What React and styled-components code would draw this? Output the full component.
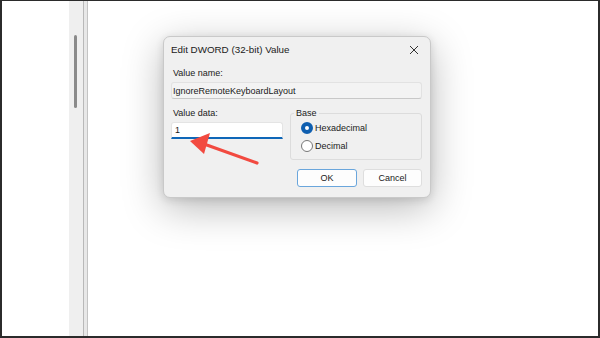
import React from 'react';
import styled, { createGlobalStyle } from 'styled-components';

const Global = createGlobalStyle`
  html, body { margin: 0; padding: 0; background: #ffffff; }
  body { font-family: "Liberation Sans", Arial, sans-serif; }
  * { box-sizing: border-box; }
`;

const Frame = styled.div`
  width: 600px;
  height: 338px;
  border-style: solid;
  border-color: #2b2b2b;
  border-width: 1px 2px 2px 2px;
  display: flex;
  overflow: hidden;
  background: #ffffff;
`;

const LeftPane = styled.div`
  width: 67px;
  background: #ffffff;
`;

const Gutter = styled.div`
  width: 14px;
  background: #efefef;
  padding: 34px 0 0 5px;
`;

const Thumb = styled.div`
  width: 3px;
  height: 73px;
  border-radius: 2px;
  background: #8a8a8a;
`;

const Divider = styled.div`
  width: 5px;
  border-left: 1px solid #b9b9b9;
  border-right: 1px solid #c4c4c4;
  background: #e8e8e8;
`;

const Content = styled.div`
  flex: 1;
  padding: 35px 0 0 75px;
`;

const Dialog = styled.div`
  position: relative;
  width: 268px;
  height: 162px;
  background: #f0f0f0;
  border: 1px solid #c9c9c9;
  border-radius: 7px;
  box-shadow: 0 10px 40px rgba(0, 0, 0, 0.28), 0 2px 8px rgba(0, 0, 0, 0.12);
  padding: 0 8px 0 7px;
  display: flex;
  flex-direction: column;
`;

const TitleBar = styled.div`
  height: 23px;
  display: flex;
  align-items: center;
  justify-content: space-between;
  padding-top: 2px;
  font-size: 9.8px;
  color: #1a1a1a;
`;

const Close = styled.svg`
  width: 10px;
  height: 10px;
  margin-right: 3px;
`;

const Label = styled.div`
  font-size: 9px;
  color: #1a1a1a;
  padding-left: 2px;
  line-height: 12px;
  margin-top: ${p => p.$top || 0}px;
`;

const NameBox = styled.div`
  margin-top: 3px;
  height: 17px;
  border: 1px solid #e2e2e2;
  border-bottom-color: #c8c8c8;
  border-radius: 3px;
  background: #f3f3f3;
  font-size: 9px;
  color: #1a1a1a;
  padding-left: 1px;
  display: flex;
  align-items: center;
`;

const Row = styled.div`
  display: flex;
  justify-content: space-between;
  margin-top: ${p => p.$top || 0}px;
`;

const DataCol = styled.div`
  width: 112px;
  display: flex;
  flex-direction: column;
`;

const DataInput = styled.div`
  margin-top: 3px;
  height: 17px;
  background: #ffffff;
  border: 1px solid #e4e4e4;
  border-bottom: 2px solid #0f67b8;
  border-radius: 3px 3px 0 0;
  font-size: 9px;
  padding-left: 3px;
  display: flex;
  align-items: center;
  color: #1a1a1a;
`;

const Group = styled.fieldset`
  margin: 0;
  width: 132px;
  height: 53px;
  border: 1px solid #dcdcdc;
  border-radius: 3px;
  padding: 2px 0 0 10px;
  display: flex;
  flex-direction: column;
  gap: 4px;
`;

const Legend = styled.legend`
  font-size: 9px;
  line-height: 12px;
  color: #1a1a1a;
  padding: 0 2px;
  margin-left: -7px;
`;

const Radio = styled.div`
  display: flex;
  align-items: center;
  gap: 2px;
  font-size: 9px;
  color: #1a1a1a;
  height: 14px;
`;

const Dot = styled.span`
  width: 12px;
  height: 12px;
  border-radius: 50%;
  border: ${p => (p.$on ? '4px solid #0f5fb0' : '1px solid #777')};
  background: #ffffff;
`;

const Buttons = styled.div`
  display: flex;
  justify-content: flex-end;
  gap: 6px;
  margin-top: 9px;
`;

const Button = styled.div`
  width: ${p => p.$w}px;
  height: 18px;
  border-radius: 3px;
  background: #fdfdfd;
  border: 1px solid ${p => (p.$primary ? '#6aa6dc' : '#dedede')};
  font-size: 9px;
  color: #1a1a1a;
  display: flex;
  align-items: center;
  justify-content: center;
`;

const Arrow = styled.svg`
  position: absolute;
  left: 0;
  top: 0;
  pointer-events: none;
`;

export default function App() {
  return (
    <>
      <Global />
      <Frame>
        <LeftPane />
        <Gutter>
          <Thumb />
        </Gutter>
        <Divider />
        <Content>
          <Dialog>
            <TitleBar>
              <span>Edit DWORD (32-bit) Value</span>
              <Close viewBox="0 0 10 10">
                <path d="M1 1 L9 9 M9 1 L1 9" stroke="#333" strokeWidth="1" />
              </Close>
            </TitleBar>
            <Label $top={7}>Value name:</Label>
            <NameBox>IgnoreRemoteKeyboardLayout</NameBox>
            <Row $top={8}>
              <DataCol>
                <Label>Value data:</Label>
                <DataInput>1</DataInput>
              </DataCol>
              <Group>
                <Legend>Base</Legend>
                <Radio>
                  <Dot $on />
                  Hexadecimal
                </Radio>
                <Radio>
                  <Dot />
                  Decimal
                </Radio>
              </Group>
            </Row>
            <Buttons>
              <Button $w={60} $primary>OK</Button>
              <Button $w={59}>Cancel</Button>
            </Buttons>
            <Arrow width="268" height="162" viewBox="0 0 268 162">
              <line x1="93" y1="126" x2="40" y2="107" stroke="#f24a40" strokeWidth="3.2" strokeLinecap="round" />
              <polygon points="26,104 46,96 40,117" fill="#f24a40" />
            </Arrow>
          </Dialog>
        </Content>
      </Frame>
    </>
  );
}
